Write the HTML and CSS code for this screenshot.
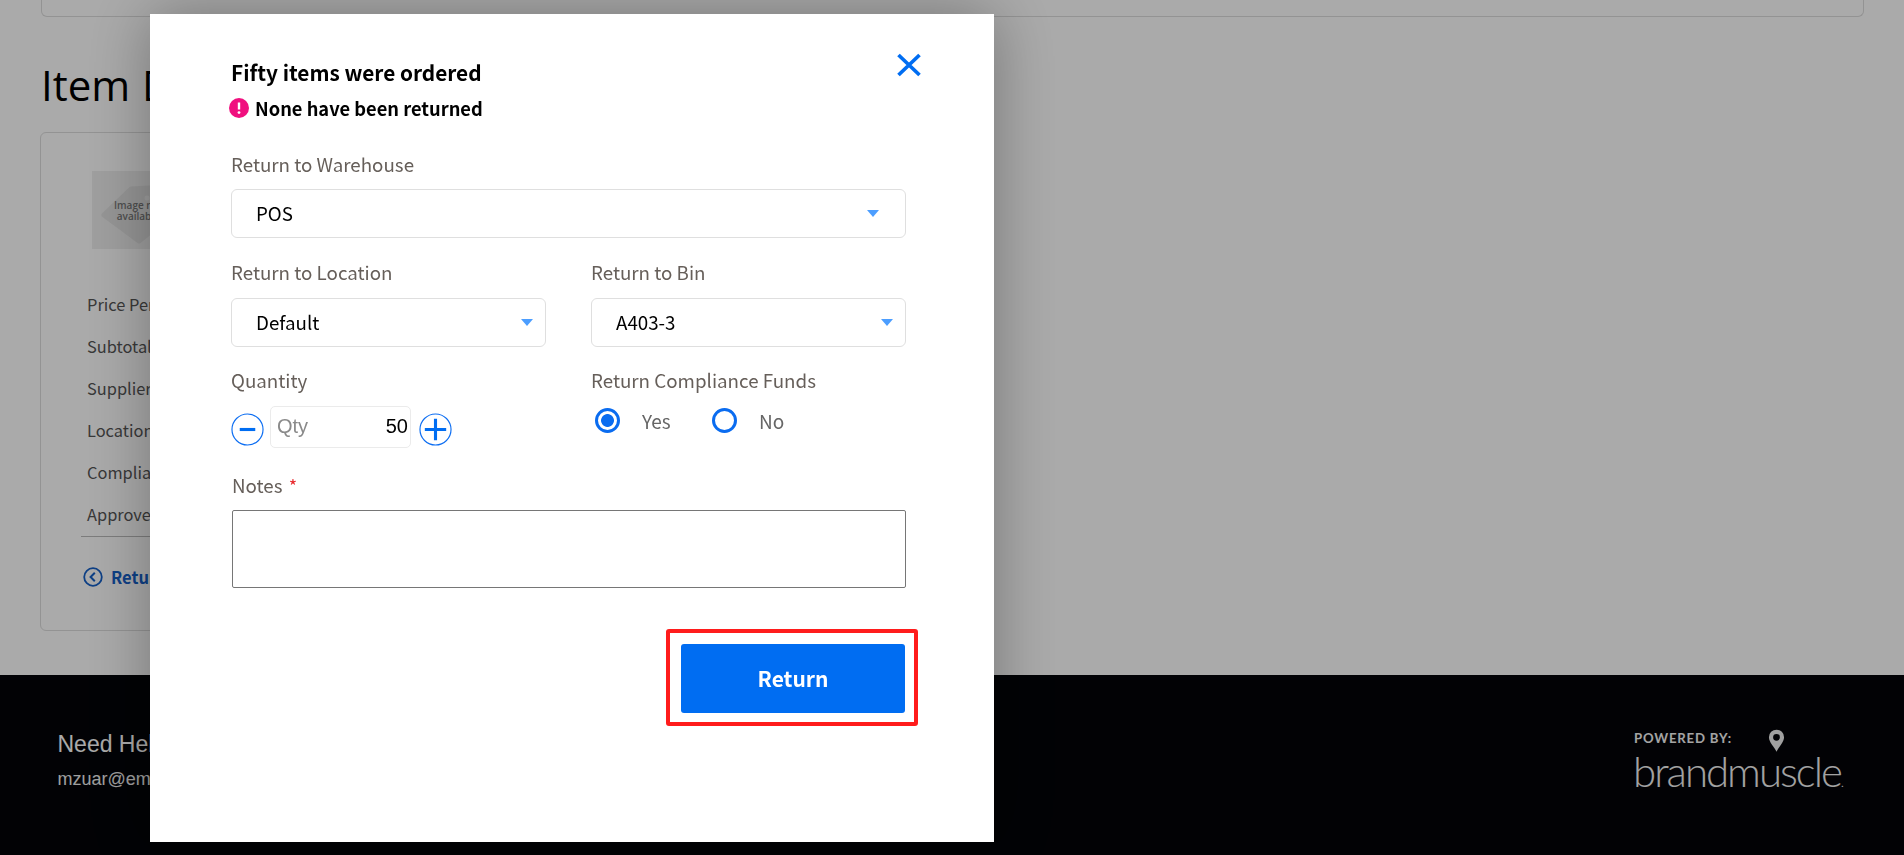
FILE: index.html
```html
<!DOCTYPE html>
<html lang="en">
<head>
<meta charset="utf-8">
<title>Return Item</title>
<link rel="stylesheet" href="styles.css">
</head>
<body>
<div class="page">
  <div class="top-card"></div>
  <h1 class="page-title">Item Details</h1>
  <section class="item-card">
    <div class="thumb">
      <svg class="thumb-tag" viewBox="0 0 80 60" width="80" height="60"><path fill-rule="evenodd" d="M3 30 L30 4 L66 2 L68 32 L38 56 Z M46 8 A5 5 0 1 0 46 18 A5 5 0 1 0 46 8 Z" fill="#e0e0e0" stroke="#e0e0e0" stroke-width="5" stroke-linejoin="round"/></svg>
      <span class="thumb-text">Image not<br>available</span>
    </div>
    <ul class="facts">
      <li>Price Per Unit</li>
      <li>Subtotal</li>
      <li>Supplier</li>
      <li>Location</li>
      <li>Compliance</li>
      <li>Approved</li>
    </ul>
    <a class="back-link">
      <svg viewBox="0 0 20 20" width="20" height="20"><circle cx="10" cy="10" r="8.8" fill="none" stroke="#1560c8" stroke-width="1.8"/><path d="M11.8 5.8 L7.6 10 L11.8 14.2" fill="none" stroke="#1560c8" stroke-width="2"/></svg>
      <span>Return</span>
    </a>
  </section>
  <footer class="footer">
    <div class="help">
      <div class="help-title">Need Help?</div>
      <div class="help-mail">mzuar@email.com</div>
    </div>
    <div class="brand">
      <div class="brand-top">
        <span class="brand-powered">POWERED BY:</span>
        <svg class="brand-pin" viewBox="0 0 18 24" width="17" height="23"><path fill-rule="evenodd" d="M9 24 C7 19 1 14 1 8.5 A8 8 0 0 1 17 8.5 C17 14 11 19 9 24 Z M9 5 A3.6 3.6 0 1 0 9 12.2 A3.6 3.6 0 1 0 9 5 Z"/></svg>
      </div>
      <div class="brand-name">brandmuscle<span class="brand-dot">.</span></div>
    </div>
  </footer>
</div>
<div class="backdrop"></div>
<div class="modal">
  <button class="close" aria-label="Close">
    <svg viewBox="0 0 26 24" width="26" height="24"><path d="M2.5 2 L23.5 22 M23.5 2 L2.5 22" stroke="#006df2" stroke-width="3.7" fill="none"/></svg>
  </button>
  <h2 class="modal-title">Fifty items were ordered</h2>
  <p class="modal-status">
    <svg viewBox="0 0 20 20" width="20" height="20"><circle cx="10" cy="10" r="10" fill="#f0107f"/><path d="M10 4.5 V11.5" stroke="#fff" stroke-width="2.4"/><circle cx="10" cy="14.6" r="1.4" fill="#fff"/></svg>
    <span>None have been returned</span>
  </p>
  <div class="field field-wh">
    <label class="label">Return to Warehouse</label>
    <div class="select select-wide"><span>POS</span><i class="caret"></i></div>
  </div>
  <div class="row row-loc">
    <div class="field">
      <label class="label">Return to Location</label>
      <div class="select"><span>Default</span><i class="caret"></i></div>
    </div>
    <div class="field">
      <label class="label">Return to Bin</label>
      <div class="select"><span>A403-3</span><i class="caret"></i></div>
    </div>
  </div>
  <div class="row row-qty">
    <div class="field">
      <label class="label">Quantity</label>
      <div class="stepper">
        <svg class="step" viewBox="0 0 34 34" width="33" height="33"><circle cx="17" cy="17" r="16" fill="#fff" stroke="#0d6ef2" stroke-width="1.2"/><path d="M9 17 H25" stroke="#006df2" stroke-width="3.2"/></svg>
        <div class="qty"><span class="qty-ph">Qty</span><span class="qty-val">50</span></div>
        <svg class="step" viewBox="0 0 34 34" width="33" height="33"><circle cx="17" cy="17" r="16" fill="#fff" stroke="#0d6ef2" stroke-width="1.2"/><path d="M6 17 H28 M17 6 V28" stroke="#006df2" stroke-width="3.2"/></svg>
      </div>
    </div>
    <div class="field">
      <label class="label">Return Compliance Funds</label>
      <div class="radios">
        <span class="radio radio-on"></span><span class="radio-text">Yes</span>
        <span class="radio"></span><span class="radio-text">No</span>
      </div>
    </div>
  </div>
  <div class="notes">
    <label class="label notes-label">Notes <span class="req">*</span></label>
    <div class="textarea"></div>
  </div>
  <div class="actions">
    <div class="highlight"><button class="return-btn">Return</button></div>
  </div>
</div>
</body>
</html>
```
FILE: styles.css
```css
* { box-sizing: border-box; }
html, body { margin: 0; height: 100%; overflow: hidden; }
body { background: #fff; font-family: "Noto Sans CJK SC", "Noto Sans", sans-serif; color: #000; }

.page { height: 855px; display: flex; flex-direction: column; }
.top-card { height: 17px; margin: 0 40px 0 41px; border: 1px solid #ddd; border-top: 0; border-radius: 0 0 6px 6px; flex: none; }
.page-title { margin: 38px 0 0 41px; height: 77px; font: 400 42px/60px "Open Sans", sans-serif; word-spacing: 1px; color: #000; flex: none; }
.item-card { width: 400px; height: 499px; margin-left: 40px; padding: 38px 0 0 41px; border: 1px solid #ddd; border-radius: 6px; flex: none; }

.thumb { position: relative; width: 100px; height: 78px; margin-left: 10px; background: #eeeeee; overflow: hidden; }
.thumb-tag { position: absolute; left: 9px; top: 14px; }
.thumb-text { position: absolute; left: 22px; top: 29px; font: 600 10px/11px "Open Sans", sans-serif; color: #777; white-space: nowrap; text-align: center; }

.facts { list-style: none; margin: 34px 0 0 -1px; padding: 0 0 1px; border-bottom: 1px solid #bbb; }
.facts li { height: 42px; font-size: 16.4px; line-height: 42px; color: #555; padding-left: 6px; white-space: nowrap; }
.back-link { display: flex; align-items: center; gap: 8px; margin-top: 28px; margin-left: 1px; font-size: 16.5px; font-weight: 600; color: #1560c8; }

.footer { flex: 1; background: #030408; display: flex; justify-content: space-between; padding: 55px 55px 0 57.5px; font-family: "Liberation Sans", sans-serif; margin-top: 44px; }
.help-title { font-size: 23px; line-height: 28px; color: #fff; }
.help-mail { font-size: 18px; line-height: 22px; color: #eee; margin-top: 10px; }
.brand { color: #fff; width: 215px; }
.brand-top { display: flex; align-items: flex-start; height: 28px; }
.brand-powered { font: 700 13.2px/17px "Lato", sans-serif; letter-spacing: .8px; color: #f6f6f6; width: 134px; }
.brand-pin { flex: none; margin-top: -1px; }
.brand-pin path { fill: #f0f0f0; }
.brand-name { font: 300 42px/38px "Lato", sans-serif; letter-spacing: -2px; color: #f4f4f4; white-space: nowrap; margin-top: -6px; margin-left: -1px; }
.brand-dot { font-size: 14px; }

.backdrop { position: fixed; inset: 0; background: rgba(0,0,0,.335); }

.modal { position: fixed; left: 150px; top: 14px; width: 844px; height: 828px; background: #fff; padding: 43px 88px 0 81px; box-shadow: 0 0 60px rgba(0,0,0,.32); }
.close { position: absolute; left: 746px; top: 39px; width: 26px; height: 24px; padding: 0; border: 0; background: none; display: block; }
.close svg { display: block; }
.modal-title { margin: 0; font-size: 20.8px; line-height: 30px; font-weight: 600; color: #000; }
.modal-status { margin: 6px 0 0 -2px; display: flex; align-items: center; gap: 6px; font-size: 18.3px; line-height: 30px; font-weight: 600; color: #000; }
.modal-status svg { flex: none; }

.field { display: flex; flex-direction: column; }
.field-wh { margin-top: 27px; }
.label { font-size: 18.75px; line-height: 28px; color: #665f5a; font-weight: 400; }
.select { margin-top: 11px; height: 49px; border: 1px solid #dfdfdf; border-radius: 6px; display: flex; align-items: center; justify-content: space-between; padding: 0 12px 0 24px; font-size: 18.75px; color: #000; }
.select span { margin-top: -2px; }
.select-wide { padding-right: 26px; }
.caret { width: 0; height: 0; border-left: 6.5px solid transparent; border-right: 6.5px solid transparent; border-top: 7px solid #4c9eff; }

.row { display: grid; grid-template-columns: 315px 315px; column-gap: 45px; }
.row-loc { margin-top: 20px; }
.row-loc .select { margin-top: 12px; }
.row-qty { margin-top: 19px; }

.stepper { display: flex; align-items: center; gap: 6px; margin-top: 12px; }
.step { flex: none; margin-top: 4px; }
.stepper .step:last-child { margin-left: 2px; }
.qty { width: 141px; height: 42px; border: 1px solid #ebebeb; border-radius: 5px; display: flex; align-items: center; justify-content: space-between; padding: 0 2px 3px 6px; font: 400 20px/24px "Liberation Sans", sans-serif; }
.qty-ph { color: #8a8a8a; }
.qty-val { color: #000; }

.radios { display: flex; align-items: center; margin: 14px 0 0 4px; }
.radio { width: 25px; height: 25px; border: 3px solid #0a6cf0; border-radius: 50%; background: #fff; flex: none; }
.radio-on { background: radial-gradient(circle, #0a6cf0 0 6px, #fff 6.8px); }
.radio-text { font-size: 19px; line-height: 25px; color: #666; margin-left: 22px; width: 70px; }

.notes { margin-top: 23px; margin-left: 1px; }
.notes-label { display: block; margin-bottom: 11px; }
.req { color: #e8262a; font-size: 18px; margin-left: 2px; }
.textarea { height: 78px; width: 674px; border: 1px solid #767676; border-radius: 2px; }

.actions { display: flex; justify-content: flex-end; margin: 41px -12px 0 0; }
.highlight { width: 252px; height: 97px; border: 4px solid #ff1c1c; border-radius: 3px; display: flex; padding: 11px 0 0 11px; }
.return-btn { width: 224px; height: 69px; padding: 0 0 1px; background: #006df2; color: #fff; border: 0; border-radius: 3px; font: 600 21px/30px "Noto Sans CJK SC", "Noto Sans", sans-serif; }
```
